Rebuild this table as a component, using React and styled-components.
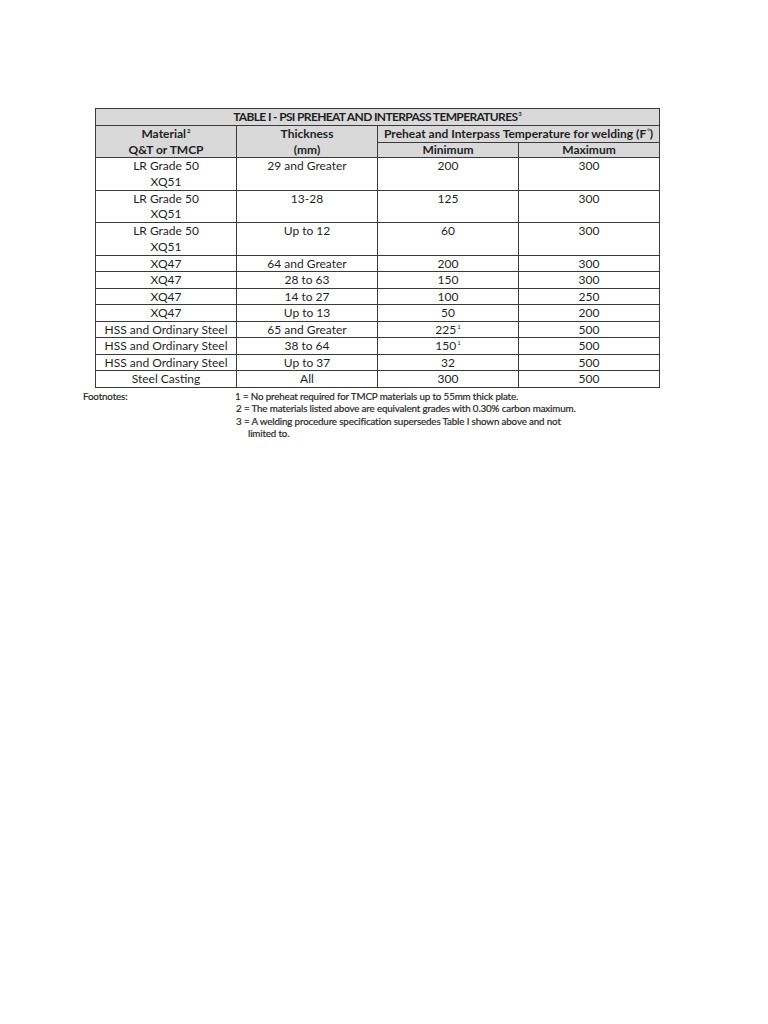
import React from "react";
import styled, { createGlobalStyle } from "styled-components";

const GlobalStyle = createGlobalStyle`
  html, body {
    margin: 0;
    padding: 0;
    background: #ffffff;
  }
  body {
    font-family: "Lato", "Liberation Sans", sans-serif;
    color: #1f1f1f;
  }
`;

const Page = styled.div`
  width: 768px;
  min-height: 1024px;
  box-sizing: border-box;
  padding: 108px 0 0 83px;
`;

const Table = styled.table`
  margin-left: 12px;
  width: 565px;
  border-collapse: collapse;
  table-layout: fixed;
  border: 1px solid #6e6e6e;
  font-size: 12px;
`;

const HeadCell = styled.th`
  background: #d9d9d9;
  border: 1px solid #3a3a3a;
  font-weight: 700;
  text-align: center;
  vertical-align: top;
  padding: 0;
  line-height: ${(p) => p.$lh || 15.5}px;
  height: ${(p) => p.$h || 16}px;
  letter-spacing: ${(p) => (p.$tight ? "-0.65px" : "normal")};
`;

const Cell = styled.td`
  border: 1px solid #3a3a3a;
  text-align: center;
  vertical-align: top;
  padding: 0;
  line-height: 15.5px;
  height: ${(p) => (p.$tall ? 31.5 : 15.5)}px;
  font-weight: 400;
`;

const Sup = styled.sup`
  font-size: 6px;
  line-height: 0;
  vertical-align: 5px;
  margin-left: 1px;
  letter-spacing: normal;
`;

const Notes = styled.div`
  display: flex;
  margin-top: 2px;
  font-size: 9.8px;
  line-height: 12.5px;
  color: #2a2a2a;
  letter-spacing: -0.15px;
`;

const NotesLabel = styled.div`
  width: 152px;
  flex-shrink: 0;
  -webkit-text-stroke: 0.2px #2a2a2a;
`;

const NotesList = styled.div`
  width: 380px;
  -webkit-text-stroke: 0.2px #2a2a2a;
`;

const Note = styled.div`
  padding-left: ${(p) => (p.$indent ? 1 : 0)}px;
  white-space: nowrap;
`;

const Hanging = styled.div`
  padding-left: 13px;
`;

const rows = [
  { mat: ["LR Grade 50", "XQ51"], th: "29 and Greater", min: "200", max: "300" },
  { mat: ["LR Grade 50", "XQ51"], th: "13-28", min: "125", max: "300" },
  { mat: ["LR Grade 50", "XQ51"], th: "Up to 12", min: "60", max: "300" },
  { mat: ["XQ47"], th: "64 and Greater", min: "200", max: "300" },
  { mat: ["XQ47"], th: "28 to 63", min: "150", max: "300" },
  { mat: ["XQ47"], th: "14 to 27", min: "100", max: "250" },
  { mat: ["XQ47"], th: "Up to 13", min: "50", max: "200" },
  { mat: ["HSS and Ordinary Steel"], th: "65 and Greater", min: "225", note: true, max: "500" },
  { mat: ["HSS and Ordinary Steel"], th: "38 to 64", min: "150", note: true, max: "500" },
  { mat: ["HSS and Ordinary Steel"], th: "Up to 37", min: "32", max: "500" },
  { mat: ["Steel Casting"], th: "All", min: "300", max: "500" },
];

export default function App() {
  return (
    <Page>
      <GlobalStyle />
      <Table>
        <thead>
          <tr>
            <HeadCell colSpan={4} $h={16} $lh={16} $tight>
              TABLE I - PSI PREHEAT AND INTERPASS TEMPERATURES<Sup>3</Sup>
            </HeadCell>
          </tr>
          <tr>
            <HeadCell rowSpan={2}>
              Material<Sup>2</Sup>
              <br />
              Q&amp;T or TMCP
            </HeadCell>
            <HeadCell rowSpan={2}>
              Thickness
              <br />
              (mm)
            </HeadCell>
            <HeadCell colSpan={2} $h={16} $lh={16}>
              Preheat and Interpass Temperature for welding (F<Sup>°</Sup>)
            </HeadCell>
          </tr>
          <tr>
            <HeadCell $h={14} $lh={14}>Minimum</HeadCell>
            <HeadCell $h={14} $lh={14}>Maximum</HeadCell>
          </tr>
        </thead>
        <tbody>
          {rows.map((r, i) => (
            <tr key={i}>
              <Cell $tall={r.mat.length > 1}>
                {r.mat.map((m, j) => (
                  <div key={j}>{m}</div>
                ))}
              </Cell>
              <Cell $tall={r.mat.length > 1}>{r.th}</Cell>
              <Cell $tall={r.mat.length > 1}>
                {r.min}
                {r.note && <Sup>1</Sup>}
              </Cell>
              <Cell $tall={r.mat.length > 1}>{r.max}</Cell>
            </tr>
          ))}
        </tbody>
      </Table>
      <Notes>
        <NotesLabel>Footnotes:</NotesLabel>
        <NotesList>
          <Note>1 = No preheat required for TMCP materials up to 55mm thick plate.</Note>
          <Note $indent>2 = The materials listed above are equivalent grades with 0.30% carbon maximum.</Note>
          <Note $indent>3 = A welding procedure specification supersedes Table I shown above and not</Note>
          <Hanging>limited to.</Hanging>
        </NotesList>
      </Notes>
    </Page>
  );
}
